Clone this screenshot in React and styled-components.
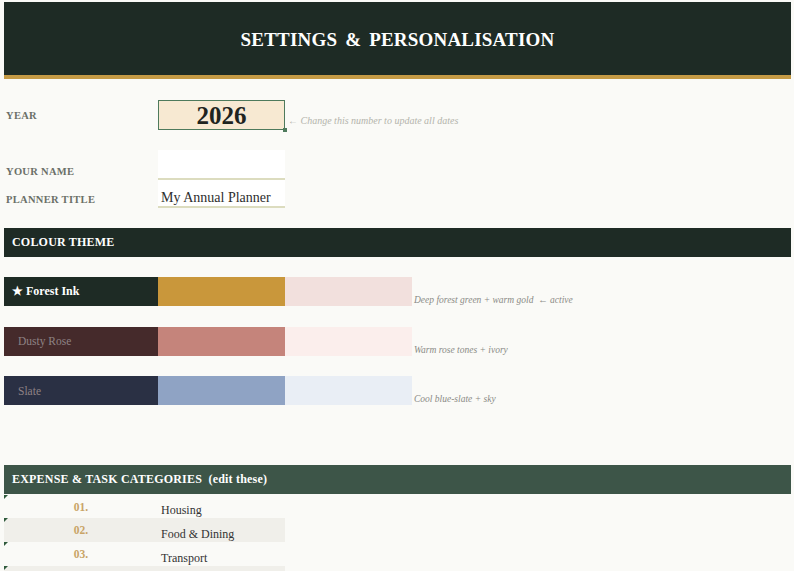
import React from 'react';
import styled, { createGlobalStyle } from 'styled-components';

const GlobalStyle = createGlobalStyle`
  html, body {
    margin: 0;
    padding: 0;
    background: #fafaf7;
  }
  body {
    font-family: "Liberation Serif", "DejaVu Serif", serif;
    color: #2b2b2b;
  }
`;

const themes = [
  { name: 'Forest Ink', active: true, colors: ['#1e2b25', '#c9973b', '#f2e0dd'], note: 'Deep forest green + warm gold  \u2190 active' },
  { name: 'Dusty Rose', colors: ['#452a2b', '#c5847b', '#fbeeec'], note: 'Warm rose tones + ivory' },
  { name: 'Slate', colors: ['#2a3044', '#8fa3c4', '#e9eef5'], note: 'Cool blue-slate + sky' },
];

const categories = ['Housing', 'Food & Dining', 'Transport', ''];

const Page = styled.main`
  width: 794px;
  height: 571px;
  overflow: hidden;
  padding: 2px 3px 0 4px;
  box-sizing: border-box;
`;

const Banner = styled.header`
  height: 73px;
  background: #1e2b25;
  border-bottom: 4px solid #c49a45;
  display: flex;
  align-items: center;
  justify-content: center;
`;

const BannerTitle = styled.h1`
  margin: 0;
  padding-top: 2px;
  color: #ffffff;
  font-size: 19px;
  font-weight: bold;
  letter-spacing: 0.2px;
  word-spacing: 3px;
  white-space: pre;
`;

const Grid = styled.div`
  display: grid;
  grid-template-columns: 154px 127px 127px 1fr;
  align-items: stretch;
  margin-top: ${p => p.$top || 0}px;
`;

const Label = styled.div`
  display: flex;
  align-items: ${p => p.$align || 'center'};
  padding-left: 2px;
  font-size: 10.5px;
  font-weight: bold;
  color: #6b7068;
  letter-spacing: 0.3px;
  height: ${p => p.$h}px;
  box-sizing: border-box;
  padding-bottom: ${p => p.$pb || 0}px;
`;

const YearCell = styled.div`
  position: relative;
  height: 30px;
  box-sizing: border-box;
  background: #f7e9d2;
  border: 1px solid #4e7a5c;
  display: flex;
  align-items: center;
  justify-content: center;
  padding-top: 2px;
  font-size: 25px;
  font-weight: bold;
  color: #1e2420;
  &::after {
    content: '';
    position: absolute;
    right: -3px;
    bottom: -3px;
    width: 4px;
    height: 4px;
    background: #4e7a5c;
  }
`;

const Hint = styled.div`
  grid-column: span 2;
  display: flex;
  align-items: center;
  padding-left: 3px;
  padding-top: 10px;
  font-size: 10px;
  font-style: italic;
  color: #b4b4ac;
  white-space: nowrap;
`;

const InputCell = styled.div`
  height: ${p => p.$h}px;
  box-sizing: border-box;
  background: #ffffff;
  border-bottom: 2px solid #dcdcbf;
  display: flex;
  align-items: flex-end;
  padding: 0 0 0 3px;
  font-size: 14px;
  color: #2e2e2e;
`;

const SectionBar = styled.div`
  height: 29px;
  margin-top: ${p => p.$top}px;
  background: ${p => p.$bg};
  display: flex;
  align-items: center;
  padding-left: 8px;
  color: #ffffff;
  font-size: 12px;
  font-weight: bold;
  letter-spacing: 0.2px;
  white-space: pre;
`;

const ThemeList = styled.div`
  display: flex;
  flex-direction: column;
  gap: 20.5px;
  margin-top: 20px;
`;

const Swatch = styled.div`
  height: 29px;
  background: ${p => p.$bg};
  display: flex;
  align-items: center;
  padding-left: ${p => (p.$active ? 8 : 14)}px;
  font-size: ${p => (p.$active ? 12 : 11.5)}px;
  font-weight: ${p => (p.$active ? 'bold' : 'normal')};
  color: ${p => (p.$active ? '#ffffff' : '#8e8284')};
  white-space: nowrap;
`;

const SwatchNote = styled.div`
  display: flex;
  align-items: flex-end;
  padding: 0 0 1px 2px;
  font-size: 9.5px;
  font-style: italic;
  color: #8a8a86;
  white-space: pre;
`;

const CatList = styled.div`
  margin-top: 1px;
`;

const CatRow = styled.div`
  position: relative;
  display: grid;
  grid-template-columns: 154px 127px;
  height: ${p => p.$h}px;
  background: ${p => (p.$shaded ? '#f0efea' : 'transparent')};
  width: 281px;
  &::before {
    content: '';
    position: absolute;
    left: 0;
    top: 0;
    border-top: 4px solid #2f5a3c;
    border-right: 4px solid transparent;
  }
`;

const CatNum = styled.div`
  display: flex;
  justify-content: center;
  align-items: flex-start;
  padding-top: 6px;
  font-size: 11.5px;
  font-weight: bold;
  color: #c9a466;
`;

const CatName = styled.div`
  display: flex;
  align-items: flex-end;
  padding: 0 0 0 3px;
  font-size: 12px;
  color: #333333;
`;

export default function App() {
  return (
    <>
      <GlobalStyle />
      <Page>
        <Banner>
          <BannerTitle>SETTINGS &amp; PERSONALISATION</BannerTitle>
        </Banner>

        <Grid $top={21}>
          <Label $h={30}>YEAR</Label>
          <YearCell>2026</YearCell>
          <Hint>{'\u2190 Change this number to update all dates'}</Hint>
        </Grid>

        <Grid $top={20}>
          <Label $h={30} $align="flex-end" $pb={3}>YOUR NAME</Label>
          <InputCell $h={30} />
        </Grid>
        <Grid>
          <Label $h={28} $align="flex-end" $pb={3}>PLANNER TITLE</Label>
          <InputCell $h={28}>My Annual Planner</InputCell>
        </Grid>

        <SectionBar $top={20} $bg="#1e2b25">COLOUR THEME</SectionBar>

        <ThemeList>
          {themes.map(t => (
            <Grid key={t.name}>
              <Swatch $bg={t.colors[0]} $active={t.active}>
                {t.active ? `\u2605 ${t.name}` : t.name}
              </Swatch>
              <Swatch $bg={t.colors[1]} />
              <Swatch $bg={t.colors[2]} />
              <SwatchNote>{t.note}</SwatchNote>
            </Grid>
          ))}
        </ThemeList>

        <SectionBar $top={60} $bg="#3d5548">EXPENSE &amp; TASK CATEGORIES  (edit these)</SectionBar>

        <CatList>
          {categories.map((c, i) => (
            <CatRow key={i} $shaded={i % 2 === 1} $h={i === 0 ? 23 : 24}>
              {c && <CatNum>{String(i + 1).padStart(2, '0')}.</CatNum>}
              {c && <CatName>{c}</CatName>}
            </CatRow>
          ))}
        </CatList>
      </Page>
    </>
  );
}
